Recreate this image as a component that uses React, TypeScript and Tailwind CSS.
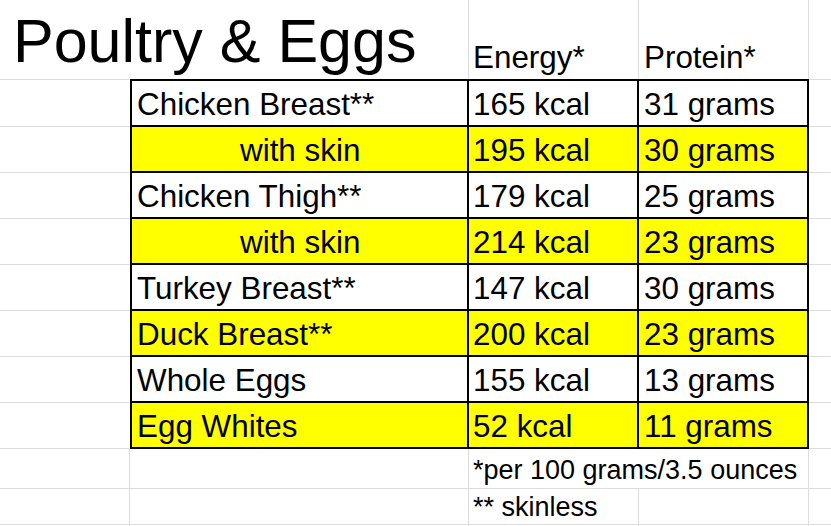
import React from "react";

type Row = { name: string; energy: string; protein: string; yellow: boolean; indent: boolean };

const rows: Row[] = [
  { name: "Chicken Breast**", energy: "165 kcal", protein: "31 grams", yellow: false, indent: false },
  { name: "with skin", energy: "195 kcal", protein: "30 grams", yellow: true, indent: true },
  { name: "Chicken Thigh**", energy: "179 kcal", protein: "25 grams", yellow: false, indent: false },
  { name: "with skin", energy: "214 kcal", protein: "23 grams", yellow: true, indent: true },
  { name: "Turkey Breast**", energy: "147 kcal", protein: "30 grams", yellow: false, indent: false },
  { name: "Duck Breast**", energy: "200 kcal", protein: "23 grams", yellow: true, indent: false },
  { name: "Whole Eggs", energy: "155 kcal", protein: "13 grams", yellow: false, indent: false },
  { name: "Egg Whites", energy: "52 kcal", protein: "11 grams", yellow: true, indent: false },
];

export default function App() {
  return (
    <div className="w-[831px] h-[526px] overflow-hidden bg-white text-black font-['Liberation_Sans',Arial,sans-serif] flex flex-col">
      {/* header row */}
      <div className="flex h-[79px] shrink-0">
        <div className="w-[469px] shrink-0 border-r border-[#dcdcdc] flex items-end pl-[13px] pb-[3px] text-[61px] leading-[1.15] whitespace-nowrap">
          Poultry &amp; Eggs
        </div>
        <div className="w-[170px] shrink-0 border-r border-[#dcdcdc] flex items-end pl-[4px] pb-[3px] text-[31.4px] leading-[1.15] whitespace-nowrap">
          Energy*
        </div>
        <div className="w-[170px] shrink-0 border-r border-[#dcdcdc] flex items-end pl-[5px] pb-[3px] text-[31.4px] leading-[1.15] whitespace-nowrap">
          Protein*
        </div>
        <div className="flex-1" />
      </div>

      {/* table rows */}
      {rows.map((r, i) => {
        const first = i === 0;
        const bg = r.yellow ? "bg-[#ffff00]" : "bg-white";
        return (
          <div key={i} className={first ? "flex h-[48px] shrink-0" : "flex h-[46px] shrink-0"}>
            <div
              className={
                first
                  ? "w-[130px] shrink-0 border-t border-b border-[#dcdcdc]"
                  : "w-[130px] shrink-0 border-b border-[#dcdcdc]"
              }
            />
            <div
              className={`w-[339px] shrink-0 ${bg} border-l-2 border-r-2 border-b-2 border-black ${
                first ? "border-t-2" : ""
              } flex items-end pb-[2px] text-[31.4px] leading-[1.15] whitespace-nowrap ${
                r.indent ? "pl-[108px]" : "pl-[5px]"
              }`}
            >
              {r.name}
            </div>
            <div
              className={`w-[170px] shrink-0 ${bg} border-r-2 border-b-2 border-black ${
                first ? "border-t-2" : ""
              } flex items-end pb-[2px] pl-[4px] text-[31.4px] leading-[1.15] whitespace-nowrap`}
            >
              {r.energy}
            </div>
            <div
              className={`w-[170px] shrink-0 ${bg} border-r-2 border-b-2 border-black ${
                first ? "border-t-2" : ""
              } flex items-end pb-[2px] pl-[5px] text-[31.4px] leading-[1.15] whitespace-nowrap`}
            >
              {r.protein}
            </div>
            <div
              className={
                first
                  ? "flex-1 border-t border-b border-[#dcdcdc]"
                  : "flex-1 border-b border-[#dcdcdc]"
              }
            />
          </div>
        );
      })}

      {/* footnote row 1 */}
      <div className="flex h-[40px] shrink-0">
        <div className="w-[130px] shrink-0 border-r border-b border-[#dcdcdc]" />
        <div className="w-[339px] shrink-0 border-r border-b border-[#dcdcdc]" />
        <div className="w-[340px] shrink-0 border-r border-b border-[#dcdcdc] flex items-end pl-[4px] pb-[2px] text-[27px] leading-[1.15] whitespace-nowrap">
          *per 100 grams/3.5 ounces
        </div>
        <div className="flex-1 border-b border-[#dcdcdc]" />
      </div>

      {/* footnote row 2 */}
      <div className="flex h-[36px] shrink-0">
        <div className="w-[130px] shrink-0 border-r border-b border-[#dcdcdc]" />
        <div className="w-[339px] shrink-0 border-r border-b border-[#dcdcdc]" />
        <div className="w-[170px] shrink-0 border-r border-b border-[#dcdcdc] flex items-end pl-[4px] pb-[1px] text-[27px] leading-[1.15] whitespace-nowrap">
          ** skinless
        </div>
        <div className="w-[170px] shrink-0 border-r border-b border-[#dcdcdc]" />
        <div className="flex-1 border-b border-[#dcdcdc]" />
      </div>

      {/* remaining */}
      <div className="flex flex-1">
        <div className="w-[130px] shrink-0 border-r border-[#dcdcdc]" />
        <div className="w-[339px] shrink-0 border-r border-[#dcdcdc]" />
        <div className="w-[170px] shrink-0 border-r border-[#dcdcdc]" />
        <div className="w-[170px] shrink-0 border-r border-[#dcdcdc]" />
        <div className="flex-1" />
      </div>
    </div>
  );
}
